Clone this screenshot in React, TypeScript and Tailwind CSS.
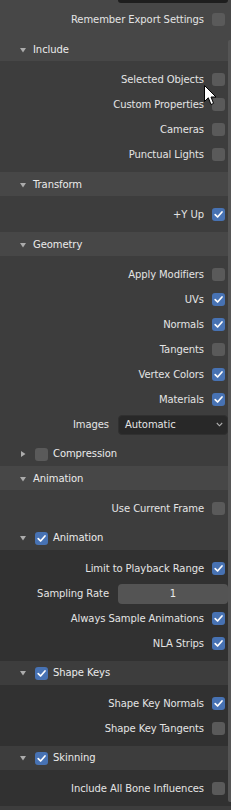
import React from 'react';

const FONT = { fontFamily: '"DejaVu Sans", "Liberation Sans", sans-serif' };

const Checkbox: React.FC<{ checked?: boolean }> = ({ checked }) => (
    <span
        className={`w-[13px] h-[13px] rounded-[3px] flex items-center justify-center shrink-0 ${checked ? 'bg-[#4772b3]' : 'bg-[#5a5a5a]'}`}
    >
        {checked && (
            <svg width="11" height="11" viewBox="0 0 11 11">
                <path d="M2.2 5.6 L4.6 8 L9 3" fill="none" stroke="#ffffff" strokeWidth="1.7" strokeLinecap="round" strokeLinejoin="round" />
            </svg>
        )}
    </span>
);

const Triangle: React.FC<{ open?: boolean }> = ({ open = true }) => (
    <svg width="6" height="6" viewBox="0 0 6 6" className="shrink-0">
        {open ? <path d="M0 1 L6 1 L3 5.5 Z" fill="#acacac" /> : <path d="M1 0 L5.5 3 L1 6 Z" fill="#acacac" />}
    </svg>
);

const Row: React.FC<{ label: string; checked?: boolean }> = ({ label, checked }) => (
    <div className="h-[25px] flex items-center justify-end pr-[6px] gap-[8px]">
        <span className="text-[#e4e4e4] whitespace-nowrap">{label}</span>
        <Checkbox checked={checked} />
    </div>
);

const Header: React.FC<{ title: string }> = ({ title }) => (
    <div className="h-[24px] bg-[#474747] flex items-center pl-[20px] gap-[7px] pt-[1px]">
        <Triangle />
        <span className="text-[#ebebeb]">{title}</span>
    </div>
);

const SubHeader: React.FC<{ title: string; open?: boolean; checked?: boolean }> = ({ title, open = true, checked }) => (
    <div className="h-[24px] flex items-center pl-[20px]">
        <Triangle open={open} />
        <span className="ml-[9px]">
            <Checkbox checked={checked} />
        </span>
        <span className="ml-[5px] text-[#ebebeb]">{title}</span>
    </div>
);

const Body: React.FC<{ children: React.ReactNode; nested?: boolean }> = ({ children, nested }) => (
    <div className={`pt-[6px] pb-[5px] ${nested ? 'bg-[#313131]' : 'bg-[#3d3d3d]'}`}>{children}</div>
);

const Cursor = () => (
    <svg width="13" height="21" viewBox="0 0 13 21" className="absolute left-[204px] top-[85px]">
        <path d="M0.5 0.5 L0.5 16.5 L4.3 12.8 L7 19.5 L9.6 18.4 L7 12 L12 12 Z" fill="#ffffff" stroke="#000000" strokeWidth="1" strokeLinejoin="round" />
    </svg>
);

export default function App() {
    return (
        <div
            className="relative w-[231px] h-[810px] overflow-hidden bg-[#3d3d3d] text-[10px] leading-none tracking-[-0.08px]"
            style={FONT}
        >
            {/* operator top */}
            <div className="bg-[#474747] pb-[5px]">
                <div className="ml-[118px] w-[110px] h-[3px] bg-[#1e1e1e] rounded-b-[3px]" />
                <div className="mt-[4px]">
                    <Row label="Remember Export Settings" />
                </div>
            </div>

            <Header title="Include" />
            <Body>
                <Row label="Selected Objects" />
                <Row label="Custom Properties" />
                <Row label="Cameras" />
                <Row label="Punctual Lights" />
            </Body>

            <Header title="Transform" />
            <Body>
                <Row label="+Y Up" checked />
            </Body>

            <Header title="Geometry" />
            <div className="bg-[#3d3d3d] pt-[6px]">
                <Row label="Apply Modifiers" />
                <Row label="UVs" checked />
                <Row label="Normals" checked />
                <Row label="Tangents" />
                <Row label="Vertex Colors" checked />
                <Row label="Materials" checked />
                <div className="h-[25px] flex items-center">
                    <span className="w-[109px] text-right text-[#e4e4e4]">Images</span>
                    <div className="ml-[9px] w-[110px] h-[20px] rounded-[4px] bg-[#282828] border border-[#303030] flex items-center justify-between pl-[6px] pr-[4px]">
                        <span className="text-[#e4e4e4]">Automatic</span>
                        <svg width="7" height="5" viewBox="0 0 7 5">
                            <path d="M0.8 1 L3.5 3.8 L6.2 1" fill="none" stroke="#b0b0b0" strokeWidth="1.1" />
                        </svg>
                    </div>
                </div>
                <div className="h-[5px]" />
                <SubHeader title="Compression" open={false} />
            </div>

            <Header title="Animation" />
            <div className="bg-[#3d3d3d] pt-[6px]">
                <Row label="Use Current Frame" />
                <div className="h-[5px]" />
                <SubHeader title="Animation" checked />
                <Body nested>
                    <Row label="Limit to Playback Range" checked />
                    <div className="h-[25px] flex items-center">
                        <span className="w-[109px] text-right text-[#e4e4e4]">Sampling Rate</span>
                        <div className="ml-[9px] w-[110px] h-[20px] rounded-[4px] bg-[#545454] flex items-center justify-center">
                            <span className="text-[#ebebeb]">1</span>
                        </div>
                    </div>
                    <Row label="Always Sample Animations" checked />
                    <Row label="NLA Strips" checked />
                </Body>
                <SubHeader title="Shape Keys" checked />
                <Body nested>
                    <Row label="Shape Key Normals" checked />
                    <Row label="Shape Key Tangents" />
                </Body>
                <SubHeader title="Skinning" checked />
                <Body nested>
                    <Row label="Include All Bone Influences" />
                </Body>
            </div>

            {/* scrollbar thumb */}
            <div className="absolute right-0 top-[40px] w-[3px] h-[762px] rounded-l-[2px] bg-[#555555]" />
            <Cursor />
        </div>
    );
}
